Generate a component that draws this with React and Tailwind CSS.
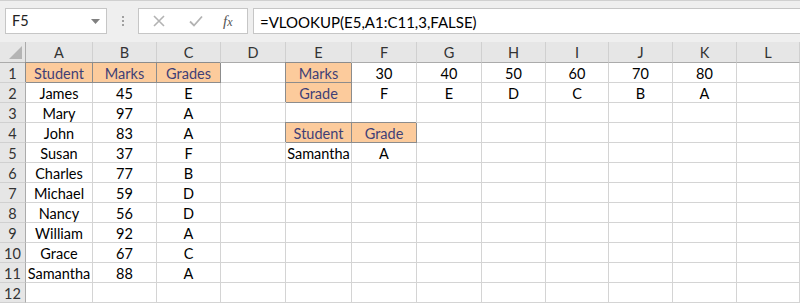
const cols = ["A", "B", "C", "D", "E", "F", "G", "H", "I", "J", "K", "L"]

// row data: each row is an array of 12 cells, null = empty; {v, o} o = orange input style
const O = (v) => ({ v, o: true })
const rows = [
  [O("Student"), O("Marks"), O("Grades"), null, O("Marks"), "30", "40", "50", "60", "70", "80", null],
  ["James", "45", "E", null, O("Grade"), "F", "E", "D", "C", "B", "A", null],
  ["Mary", "97", "A", null, null, null, null, null, null, null, null, null],
  ["John", "83", "A", null, O("Student"), O("Grade"), null, null, null, null, null, null],
  ["Susan", "37", "F", null, "Samantha", "A", null, null, null, null, null, null],
  ["Charles", "77", "B", null, null, null, null, null, null, null, null, null],
  ["Michael", "59", "D", null, null, null, null, null, null, null, null, null],
  ["Nancy", "56", "D", null, null, null, null, null, null, null, null, null],
  ["William", "92", "A", null, null, null, null, null, null, null, null, null],
  ["Grace", "67", "C", null, null, null, null, null, null, null, null, null],
  ["Samantha", "88", "A", null, null, null, null, null, null, null, null, null],
  [null, null, null, null, null, null, null, null, null, null, null, null],
]

function Cell({ cell }) {
  if (cell && cell.o) {
    return (
      <div className="h-5 pt-[3px] flex items-center justify-center bg-[#fccb9c] text-[#3f3f76] border-r border-b border-[#8c8c8c] shadow-[-1px_-1px_0_#8c8c8c] whitespace-nowrap">
        {cell.v}
      </div>
    )
  }
  return (
    <div className="h-5 pt-[3px] flex items-center justify-center text-black border-r border-b border-[#d4d4d4] whitespace-nowrap">
      {cell}
    </div>
  )
}

export default function App() {
  return (
    <div className="w-[800px] h-[303px] overflow-hidden bg-white font-['Lato','Liberation_Sans',sans-serif] text-[14.5px] leading-none">
      {/* formula bar */}
      <div className="h-[42px] bg-[#efefef] border-t border-[#d0d0d0] flex items-start pt-[7px] pl-[5px]">
        <div className="w-[102px] h-[26px] bg-white border border-[#c6c6c6] flex items-center pl-[6px] pr-[6px] text-[#222]">
          <span className="flex-1">F5</span>
          <svg width="9" height="5" viewBox="0 0 9 5">
            <path d="M0 0h9L4.5 5z" fill="#808080" />
          </svg>
        </div>
        <div className="w-[31px] h-[26px] flex flex-col items-center justify-center gap-[2px]">
          <span className="w-[2px] h-[2px] bg-[#a0a0a0]" />
          <span className="w-[2px] h-[2px] bg-[#a0a0a0]" />
          <span className="w-[2px] h-[2px] bg-[#a0a0a0]" />
        </div>
        <div className="w-[110px] h-[26px] bg-white border border-[#c6c6c6] flex items-center">
          <svg className="ml-[14px]" width="12" height="12" viewBox="0 0 12 12">
            <path d="M1 1l10 10M11 1L1 11" stroke="#b3b3b3" strokeWidth="1.6" />
          </svg>
          <svg className="ml-[24px]" width="14" height="12" viewBox="0 0 14 12">
            <path d="M1 6.5l4 4L13 1.5" stroke="#b3b3b3" strokeWidth="1.8" fill="none" />
          </svg>
          <span className="ml-[20px] font-['Liberation_Serif',serif] italic text-[15px] text-[#555]">
            f<span className="text-[12px]">x</span>
          </span>
        </div>
        <div className="ml-[5px] flex-1 h-[26px] bg-white border-y border-l border-[#c6c6c6] flex items-center pl-[6px] pt-[2px] text-[15px] text-black">
          =VLOOKUP(E5,A1:C11,3,FALSE)
        </div>
      </div>

      {/* grid */}
      <div className="grid grid-cols-[26px_67px_64px_64px_65px_66px_65px_65px_64px_63px_64px_64px_1fr]">
        {/* header row */}
        <div className="h-[21px] bg-[#e6e6e6] border-r border-b border-[#ababab] flex items-end justify-end pr-[3px] pb-[3px]">
          <svg width="13" height="13" viewBox="0 0 13 13">
            <path d="M13 0v13H0z" fill="#b4b4b4" />
          </svg>
        </div>
        {cols.map((c) => (
          <div
            key={c}
            className="h-[21px] pt-[3px] bg-[#e6e6e6] border-r border-b border-r-[#d0d0d0] border-b-[#ababab] flex items-center justify-center text-[#333]"
          >
            {c}
          </div>
        ))}

        {rows.map((r, i) => (
          <div key={i} className="contents">
            <div className="h-5 pt-[3px] bg-[#e6e6e6] border-r border-b border-r-[#ababab] border-b-[#d0d0d0] flex items-center justify-center text-[#333]">
              {i + 1}
            </div>
            {r.map((cell, j) => (
              <Cell key={j} cell={cell} />
            ))}
          </div>
        ))}
      </div>
    </div>
  )
}
